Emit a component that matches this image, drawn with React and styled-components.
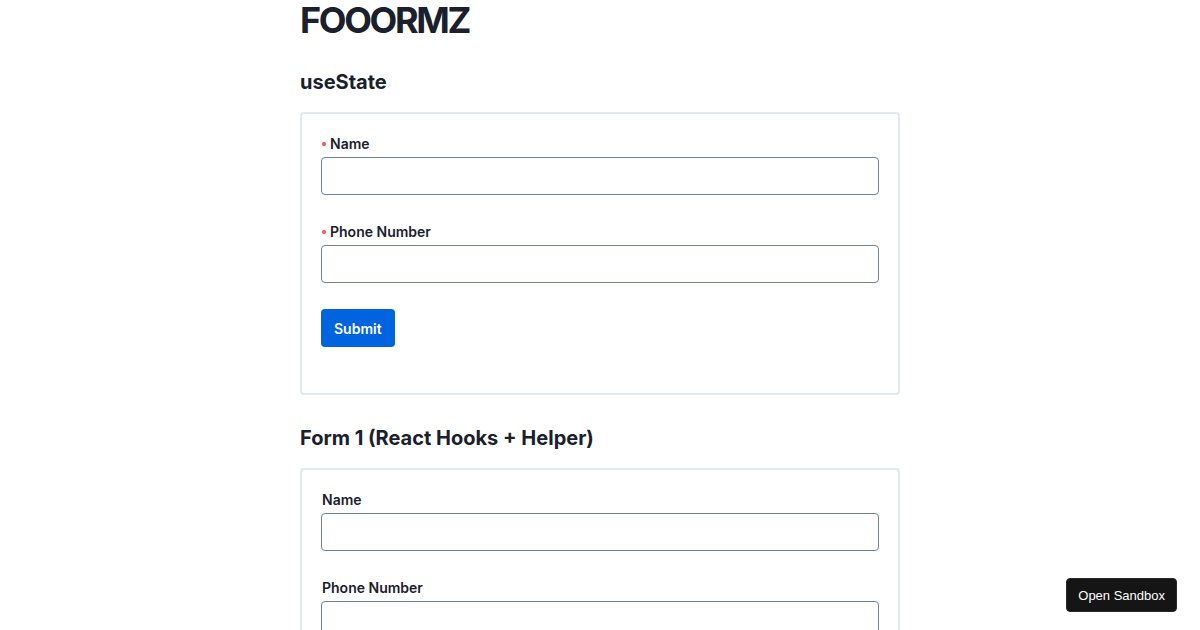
import React from "react";
import styled, { createGlobalStyle } from "styled-components";

const GlobalStyle = createGlobalStyle`
  * { box-sizing: border-box; }
  html, body { margin: 0; padding: 0; background: #ffffff; }
  body {
    font-family: Inter, "Noto Sans", "Liberation Sans", sans-serif;
    color: #1a202c;
    -webkit-font-smoothing: antialiased;
  }
`;

const Page = styled.main`
  width: 600px;
  margin: 0 auto;
  padding-bottom: 40px;
`;

const Title = styled.h1`
  margin: 0;
  font-size: 36px;
  line-height: 40px;
  font-weight: 700;
  letter-spacing: -0.065em;
  color: #1a202c;
`;

const SectionTitle = styled.h2`
  margin: ${(p) => (p.$first ? "28px" : "29px")} 0 16px;
  font-size: 20px;
  line-height: 28px;
  font-weight: 700;
  color: #1a202c;
`;

const Card = styled.form`
  border: 2px solid #e2e8f0;
  border-radius: 4px;
  padding: 19px 19px 20px;
  display: flex;
  flex-direction: column;
  align-items: flex-start;
`;

const Field = styled.div`
  width: 100%;
  display: flex;
  flex-direction: column;
  gap: 3px;
  margin-bottom: 26px;
`;

const Label = styled.label`
  display: flex;
  align-items: center;
  gap: 4px;
  padding: 1px 0 0 1px;
  font-size: 14px;
  line-height: 20px;
  font-weight: 600;
  color: #1a202c;
`;

const RequiredDot = styled.span`
  width: 4px;
  height: 4px;
  border-radius: 50%;
  background: #f05252;
  flex: none;
`;

const Input = styled.input`
  width: 100%;
  height: 38px;
  border: 1px solid #718096;
  border-radius: 4px;
  padding: 0 12px;
  font: inherit;
  font-size: 14px;
  background: #fff;
  outline: none;
`;

const SubmitButton = styled.button`
  height: 38px;
  padding: 0 13px;
  border: none;
  border-radius: 4px;
  background: #0064e0;
  color: #fff;
  font-family: inherit;
  font-size: 14px;
  font-weight: 600;
  margin-bottom: 26px;
  cursor: pointer;
`;

const SandboxButton = styled.a`
  position: fixed;
  right: 23px;
  bottom: 18px;
  height: 34px;
  padding: 0 11px;
  display: flex;
  align-items: center;
  background: #151515;
  border: 1px solid #2a2a2a;
  border-radius: 4px;
  color: #fff;
  font-family: "Liberation Sans", Arial, sans-serif;
  font-size: 13px;
  text-decoration: none;
`;

function FormField({ label, required }) {
  return (
    <Field>
      <Label>
        {required && <RequiredDot />}
        {label}
      </Label>
      <Input type="text" />
    </Field>
  );
}

export default function App() {
  return (
    <>
      <GlobalStyle />
      <Page>
        <Title>FOOORMZ</Title>

        <SectionTitle $first>useState</SectionTitle>
        <Card onSubmit={(e) => e.preventDefault()}>
          <FormField label="Name" required />
          <FormField label="Phone Number" required />
          <SubmitButton type="submit">Submit</SubmitButton>
        </Card>

        <SectionTitle>Form 1 (React Hooks + Helper)</SectionTitle>
        <Card onSubmit={(e) => e.preventDefault()}>
          <FormField label="Name" />
          <FormField label="Phone Number" />
          <SubmitButton type="submit">Submit</SubmitButton>
        </Card>
      </Page>
      <SandboxButton href="#">Open Sandbox</SandboxButton>
    </>
  );
}
